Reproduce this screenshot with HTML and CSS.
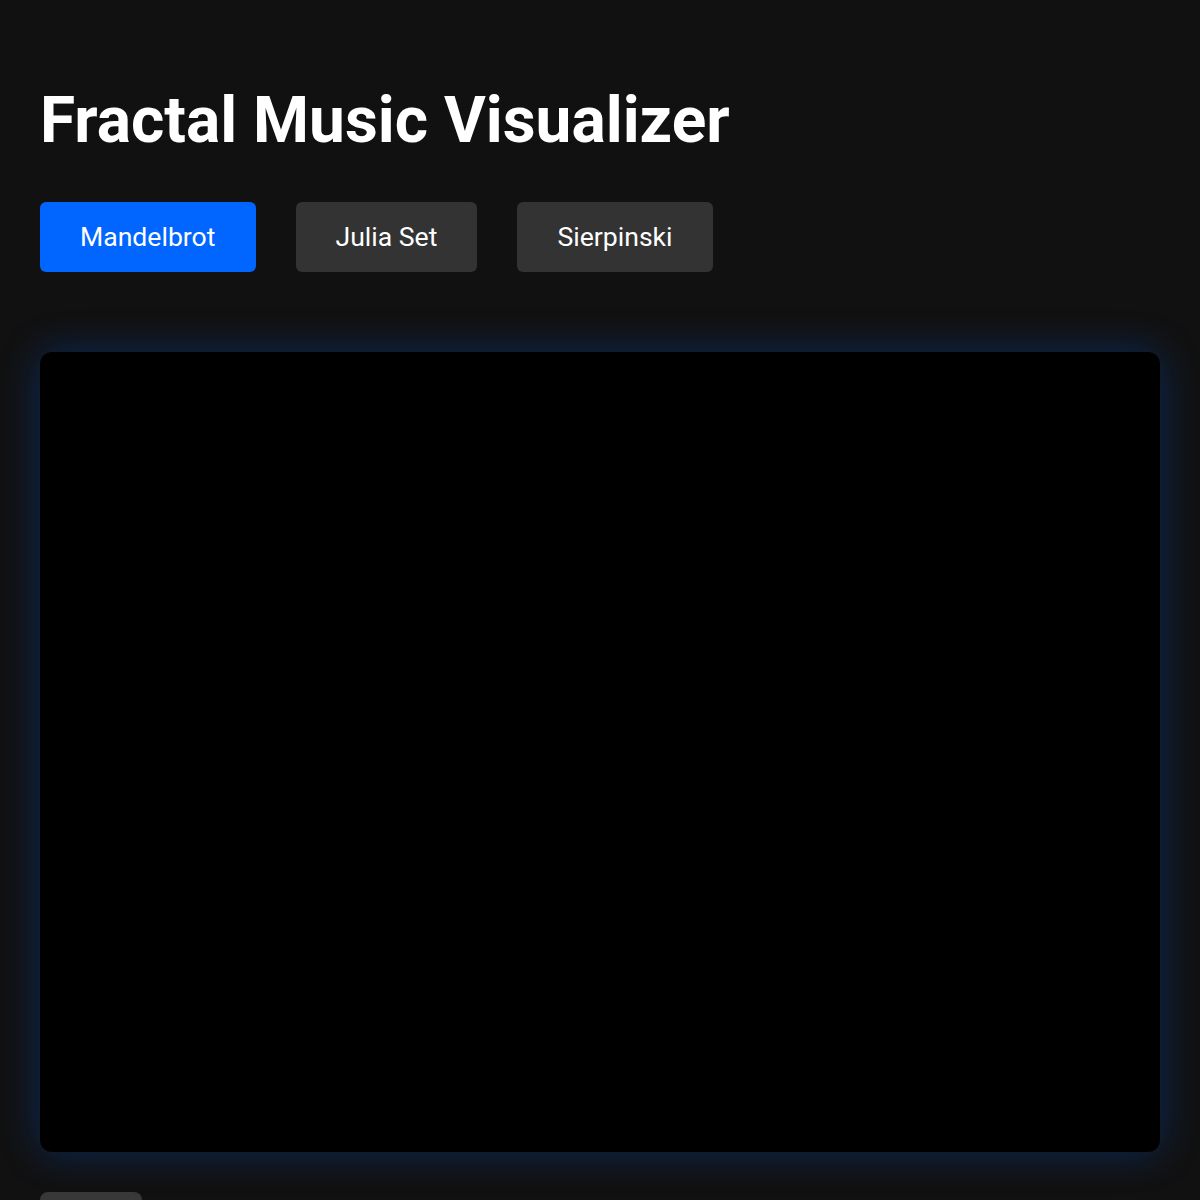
FILE: index.html
```html
<!DOCTYPE html>
<html lang="en">
<head>
  <meta charset="UTF-8">
  <meta name="viewport" content="width=device-width, initial-scale=1.0">
  <title>Fractal Music Visualizer</title>
  <link rel="stylesheet" href="styles.css">
</head>
<body>

  <h1>Fractal Music Visualizer</h1>

  <div class="controls">
    <button class="fractal-btn active" data-type="mandelbrot">Mandelbrot</button>
    <button class="fractal-btn" data-type="julia">Julia Set</button>
    <button class="fractal-btn" data-type="sierpinski">Sierpinski</button>
  </div>

  <canvas id="fractal" width="1120" height="800"></canvas>

  <div class="audio-controls">
    <button class="play-btn">Play</button>
  </div>

</body>
</html>
```

FILE: styles.css
```css
* {
  box-sizing: border-box;
}

body {
  margin: 0;
  padding: 40px;
  background: #111;
  color: #fff;
  font-family: Roboto, 'Liberation Sans', sans-serif;
}

h1 {
  font-size: 64px;
  font-weight: 700;
  margin: 43px 0 44px;
}

.controls {
  display: flex;
  gap: 40px;
  margin-bottom: 80px;
}

.fractal-btn {
  font-family: inherit;
  font-size: 26.6px;
  line-height: 30px;
  padding: 20px 40px;
  border: none;
  border-radius: 6px;
  background: #333;
  color: #fff;
  cursor: pointer;
}

.fractal-btn.active {
  background: #0066ff;
}

#fractal {
  display: block;
  width: 1120px;
  height: 800px;
  background: #000;
  border-radius: 12px;
  box-shadow: 0 0 40px rgba(0, 102, 255, 0.3);
}

.audio-controls {
  margin-top: 40px;
}

.play-btn {
  font-family: inherit;
  font-size: 26.6px;
  line-height: 30px;
  width: 102px;
  padding: 20px 0;
  border: none;
  border-radius: 8px;
  background: #383838;
  color: #fff;
}
```
